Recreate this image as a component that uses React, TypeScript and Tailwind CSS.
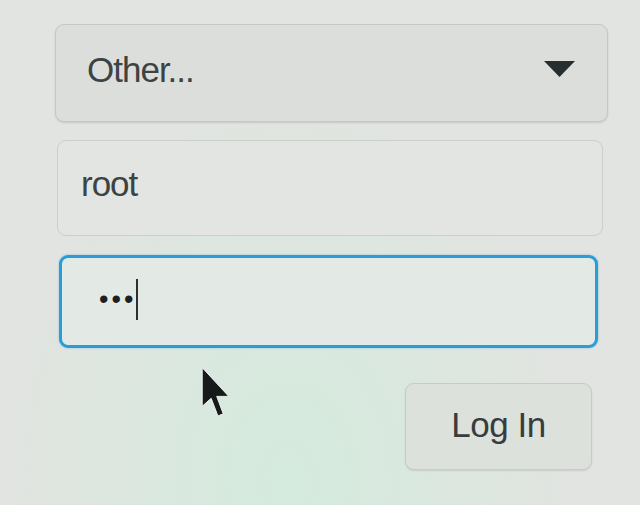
import React from "react";

// Small mouse pointer drawn over the form
function Pointer() {
  return (
    <svg width="29" height="54" viewBox="0 0 12 22" className="absolute left-[201px] top-[366px]">
      <path d="M0.5 0.5 L0.5 16.5 L4.2 13.2 L7 20.5 L9.2 19.6 L6.5 12.4 L11.5 12.4 Z" fill="#161a1a" stroke="#f1f4f1" strokeWidth="0.4" />
    </svg>
  );
}

export default function App() {
  const font = { fontFamily: '"Liberation Sans", Arial, sans-serif' };

  return (
    <div
      className="relative w-[640px] h-[505px] overflow-hidden bg-[#e1e4e0] bg-[radial-gradient(ellipse_at_45%_95%,#d4ebdd_0%,transparent_55%)]"
      style={font}
    >
      <div className="flex flex-col pt-[24px] pl-[55px] text-[#3d4242]">
        {/* server picker */}
        <div className="flex items-center justify-between w-[553px] h-[98px] rounded-[9px] border border-[#c6c8c4] bg-[#dcdedb] shadow-[0_1px_2px_rgba(0,0,0,0.12)] pl-[31px] pr-[32px] pb-[8px]">
          <span className="text-[35px] leading-none tracking-[-1px]">Other...</span>
          <svg width="31" height="16" viewBox="0 0 31 16">
            <path d="M0 0 H31 L15.5 16 Z" fill="#272c2d" />
          </svg>
        </div>

        {/* user name */}
        <div className="flex items-center mt-[18px] ml-[2px] w-[546px] h-[96px] rounded-[9px] border border-[#cdcfcb] bg-[#e2e5e1] pl-[23px] pb-[10px]">
          <span className="text-[35px] leading-none tracking-[-1px]">root</span>
        </div>

        {/* password, focused */}
        <div className="flex items-center mt-[19px] ml-[4px] w-[539px] h-[93px] rounded-[9px] border-[3px] border-[#2a9dd7] bg-[#e3e9e4] shadow-[0_0_2px_rgba(42,157,215,0.5)] pl-[37px] pb-[4px]">
          <span className="text-[27px] leading-none tracking-[3px] text-[#1c2020]">•••</span>
          <span className="w-[2px] h-[41px] bg-[#2c3131]" />
        </div>

        <div className="flex mt-[35px] ml-[350px]">
          <button
            type="button"
            className="flex items-center justify-center w-[187px] h-[87px] rounded-[9px] border border-[#c8cbc6] bg-[#dde1dc] shadow-[0_1px_2px_rgba(0,0,0,0.1)] pb-[4px] text-[35px] leading-none tracking-[-0.5px] text-[#373c3c]"
            style={font}
          >
            Log In
          </button>
        </div>
      </div>

      <Pointer />
    </div>
  );
}
